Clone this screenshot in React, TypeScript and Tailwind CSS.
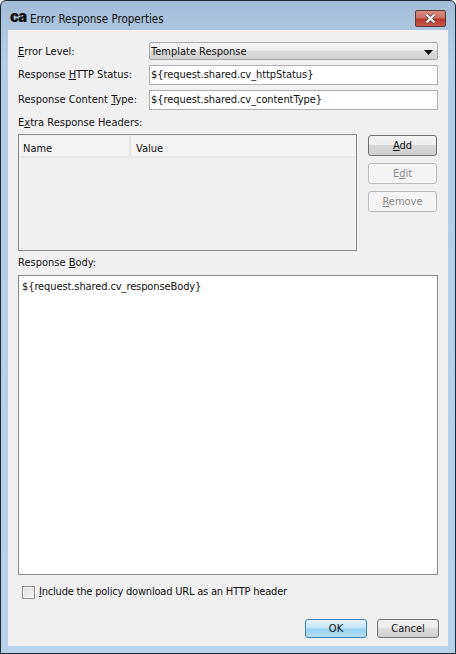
const font = "font-['DejaVu_Sans_Condensed','DejaVu_Sans',sans-serif] text-[11px] leading-[16px] text-[#111]"

function TextRow({ label, value }: { label: React.ReactNode; value: string }) {
  return (
    <div className="flex items-center h-[20px]">
      <div className="w-[131px] shrink-0 whitespace-nowrap">{label}</div>
      <div className="flex-1 h-[20px] border border-[#acb0b4] bg-white pl-[1px] flex items-center tracking-[-0.07px]">{value}</div>
    </div>
  )
}

function SideButton({ children, disabled }: { children: React.ReactNode; disabled?: boolean }) {
  return (
    <button
      className={
        disabled
          ? "w-[69px] h-[21px] rounded-[3px] border border-[#b9bdc0] bg-[#f4f4f4] text-[#8a8a8a] flex items-center justify-center"
          : "w-[69px] h-[21px] rounded-[3px] border border-[#6f6f6f] bg-[linear-gradient(#f4f4f4_0%,#ececec_45%,#d6d6d6_50%,#cfcfcf_100%)] flex items-center justify-center"
      }
    >
      <span>{children}</span>
    </button>
  )
}

export default function App() {
  return (
    <div className={`${font} w-[456px] h-[654px] flex flex-col rounded-t-[6px] border border-[#1d2a36] bg-[linear-gradient(#a3bdd8_0px,#b4cde6_60px,#b9d2ec_100%)] overflow-hidden`}>
      {/* title bar */}
      <div className="h-[29px] shrink-0 flex items-center pt-[6px] pl-[9px] pr-[9px]">
        <span className="w-[16px] text-[15px] leading-[15px] font-black tracking-[-1px] text-[#111] font-['Inter',sans-serif] mt-[-4px]">ca</span>
        <span className="ml-[4px] text-[11.5px]">Error Response Properties</span>
        <div className="ml-auto w-[31px] h-[17px] rounded-[2px] border border-[#5c3a38] bg-[linear-gradient(#d98d82_0%,#cf6f62_45%,#b8392c_55%,#c8584a_100%)] flex items-center justify-center">
          <svg width="13" height="11" viewBox="0 0 13 11">
            <path d="M2.5 1.5 L10.5 9.5 M10.5 1.5 L2.5 9.5" stroke="#4a3a3a" strokeWidth="3.6" />
            <path d="M2.5 1.5 L10.5 9.5 M10.5 1.5 L2.5 9.5" stroke="#f4f1f0" strokeWidth="2.4" />
          </svg>
        </div>
      </div>

      {/* dialog body */}
      <div className="flex-1 mx-[7px] mb-[7px] bg-[#f0f0f0] flex flex-col pt-[12px] pl-[10px] pr-[10px]">
        <div className="flex items-center h-[18px]">
          <div className="w-[131px] shrink-0 pt-px"><u>E</u>rror Level:</div>
          <div className="flex-1 h-[18px] rounded-[2px] border border-[#a8a8a8] bg-[linear-gradient(#f4f4f4_0%,#ececec_45%,#dcdcdc_50%,#d0d0d0_100%)] pl-[1px] pr-[4px] flex items-center justify-between">
            <span className="pt-px">Template Response</span>
            <svg width="9" height="5" viewBox="0 0 9 5" className="mt-[3px]"><path d="M0 0 H9 L4.5 5 Z" fill="#111" /></svg>
          </div>
        </div>
        <div className="mt-[5px] flex flex-col gap-[5px]">
          <TextRow label={<>Response <u>H</u>TTP Status:</>} value="${request.shared.cv_httpStatus}" />
          <TextRow label={<>Response Content <u>T</u>ype:</>} value="${request.shared.cv_contentType}" />
        </div>

        <div className="mt-[4px] h-[16px] pt-px">E<u>x</u>tra Response Headers:</div>
        <div className="mt-[4px] flex">
          <div className="w-[339px] h-[117px] border border-[#82888c] bg-[#f0f0f0] p-px">
            <div className="flex h-[22px] bg-[#f3f3f3] border-b-2 border-[#e6e6e6]">
              <div className="w-[111px] pl-[3px] pt-[5px] border-r-2 border-[#e4e4e4]">Name</div>
              <div className="flex-1 pl-[5px] pt-[5px]">Value</div>
            </div>
          </div>
          <div className="ml-[11px] mt-px flex flex-col gap-[7px]">
            <SideButton><u>A</u>dd</SideButton>
            <SideButton disabled>E<u>d</u>it</SideButton>
            <SideButton disabled><u>R</u>emove</SideButton>
          </div>
        </div>

        <div className="mt-[4px] h-[16px]">Response <u>B</u>ody:</div>
        <div className="mt-[4px] h-[300px] border border-[#82888c] bg-white px-[3px] py-[3px] tracking-[-0.1px]">
          {"${request.shared.cv_responseBody}"}
        </div>

        <div className="mt-[10px] ml-[4px] flex items-center h-[14px]">
          <span className="w-[13px] h-[13px] border border-[#8e8f8f] bg-[linear-gradient(135deg,#dcdcdc,#f6f6f6)] outline outline-1 -outline-offset-2 outline-[#f4f4f4]" />
          <span className="ml-[4px] tracking-[-0.2px]"><u>I</u>nclude the policy download URL as an HTTP header</span>
        </div>

        <div className="mt-[20px] flex justify-end gap-[10px] -mr-px">
          <button className="w-[62px] h-[19px] rounded-[3px] border border-[#3c7fb1] bg-[linear-gradient(#e5f4fc_0%,#c4e5f6_45%,#98d1ef_55%,#b6dff5_100%)]">OK</button>
          <button className="w-[62px] h-[19px] rounded-[3px] border border-[#707070] bg-[linear-gradient(#f2f2f2_0%,#ebebeb_45%,#dddddd_50%,#cfcfcf_100%)]">Cancel</button>
        </div>
      </div>
    </div>
  )
}
